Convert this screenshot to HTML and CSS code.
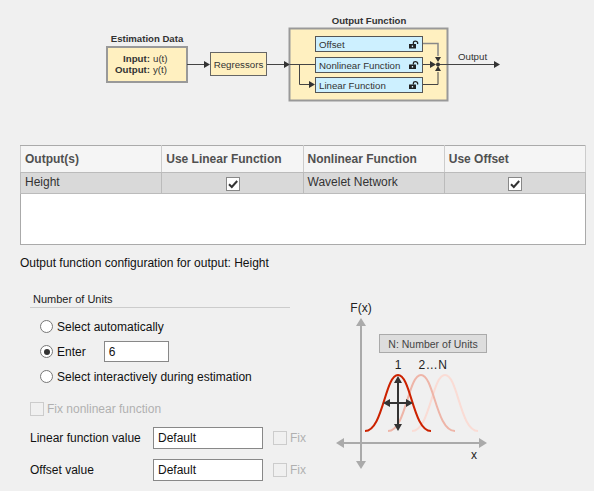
FILE: index.html
```html
<!DOCTYPE html>
<html>
<head>
  <meta charset="utf-8">
  <title>Output Function</title>
  <link rel="stylesheet" href="styles.css">
</head>
<body>
  <svg class="block-diagram" width="594" height="145" viewBox="0 0 594 145">
    <defs>
      <g id="lock">
        <rect x="0" y="3.5" width="7" height="4.5" fill="#222"/>
        <path d="M4.4 3.5V2Q4.4 .6 6.3 .6T8.6 2V3.5" fill="none" stroke="#222" stroke-width="1.3"/>
        <rect x="2.8" y="5" width="1.3" height="1.6" fill="#cdf0ff"/>
      </g>
    </defs>

    <!-- estimation data -->
    <text class="dg-title" x="147" y="42" text-anchor="middle">Estimation Data</text>
    <rect class="dg-yellow" x="107" y="47" width="80" height="35"/>
    <text class="dg-text" x="150" y="62" text-anchor="end"><tspan class="dg-bold">Input:</tspan></text>
    <text class="dg-text" x="153" y="62">u(t)</text>
    <text class="dg-text" x="150" y="73" text-anchor="end"><tspan class="dg-bold">Output:</tspan></text>
    <text class="dg-text" x="153" y="73">y(t)</text>

    <!-- regressors -->
    <rect class="dg-yellow thin" x="210.5" y="52.5" width="56" height="23"/>
    <text class="dg-text" x="238.5" y="68" text-anchor="middle">Regressors</text>

    <!-- output function -->
    <text class="dg-title" x="369" y="24" text-anchor="middle">Output Function</text>
    <rect class="dg-yellow" x="289.5" y="28.5" width="158" height="72"/>
    <rect class="dg-blue" x="315.5" y="36.5" width="107" height="15"/>
    <rect class="dg-blue" x="315.5" y="57.5" width="107" height="15"/>
    <rect class="dg-blue" x="315.5" y="77.5" width="107" height="15"/>
    <text class="dg-text" x="319" y="48">Offset</text>
    <text class="dg-text" x="319" y="69">Nonlinear Function</text>
    <text class="dg-text" x="319" y="89">Linear Function</text>
    <use href="#lock" x="409" y="40.5"/>
    <use href="#lock" x="409" y="61"/>
    <use href="#lock" x="409" y="81"/>

    <!-- wires -->
    <path class="wire" d="M187 64.5H205M267 64.5H284M290 64.5H315M299.5 64.5V84.5H310M423 64.5H431M438 64.5H497"/>
    <path class="wire gray" d="M423 43.5H438V56"/>
    <path class="wire" d="M423 84.5H438V72"/>
    <path class="arrow" d="M204 61L210 64.5L204 68ZM284 61L290 64.5L284 68ZM309 81L315 84.5L309 88ZM430 61L436 64.5L430 68ZM435 57H441L438 62ZM435 71H441L438 66ZM494 61L500 64.5L494 68Z"/>
    <circle class="arrow" cx="438" cy="64.5" r="2"/>
    <text class="dg-text" x="458" y="60">Output</text>
  </svg>

  <table class="outputs-table">
    <thead>
      <tr>
        <th>Output(s)</th>
        <th>Use Linear Function</th>
        <th>Nonlinear Function</th>
        <th>Use Offset</th>
      </tr>
    </thead>
    <tbody>
      <tr class="selected">
        <td>Height</td>
        <td class="center"><span class="check"><svg width="12" height="12" viewBox="0 0 12 12"><path d="M2 6.2L4.8 9L10.2 3" fill="none" stroke="#333" stroke-width="2"/></svg></span></td>
        <td>Wavelet Network</td>
        <td class="center"><span class="check"><svg width="12" height="12" viewBox="0 0 12 12"><path d="M2 6.2L4.8 9L10.2 3" fill="none" stroke="#333" stroke-width="2"/></svg></span></td>
      </tr>
      <tr class="filler"><td colspan="4"></td></tr>
    </tbody>
  </table>

  <p class="config-label">Output function configuration for output: Height</p>

  <div class="config">
    <div class="config-left">
      <div class="group-title">Number of Units</div>

      <div class="radio-row"><span class="radio"></span>Select automatically</div>
      <div class="radio-row">
        <span class="radio on"></span>Enter
        <span class="field field-units">6</span>
      </div>
      <div class="radio-row"><span class="radio"></span>Select interactively during estimation</div>

      <div class="fix-row disabled"><span class="check off"></span>Fix nonlinear function</div>

      <div class="value-row">
        <span class="value-label">Linear function value</span>
        <span class="field field-value">Default</span>
        <span class="fix disabled"><span class="check off"></span>Fix</span>
      </div>
      <div class="value-row">
        <span class="value-label">Offset value</span>
        <span class="field field-value">Default</span>
        <span class="fix disabled"><span class="check off"></span>Fix</span>
      </div>
    </div>

    <svg class="units-plot" width="170" height="180" viewBox="330 295 170 180">
      <path class="curve c3" d="M412 431C430 431 432 375 445 375S460 431 478 431"/>
      <path class="curve c2" d="M388 431C406 431 408 375 421 375S436 431 455 431"/>
      <path class="curve c1" d="M365 431C383 431 385 375 398 375S413 431 431 431"/>

      <path class="axis" d="M361 325V462M342 443H481"/>
      <path class="axis-head" d="M361 318L366 326H356ZM361 469L366 461H356ZM336 443L344 438V448ZM487 443L479 438V448Z"/>

      <path class="move" d="M398 381V427M387 403H409"/>
      <path class="move-head" d="M398 376L402 383H394ZM398 431L402 424H394ZM383 403L390 399V407ZM413 403L406 399V407Z"/>

      <rect class="legend" x="379.5" y="334.5" width="107" height="18"/>
      <text class="legend-text" x="433" y="348" text-anchor="middle">N: Number of Units</text>
      <text class="plot-text" x="361" y="312" text-anchor="middle">F(x)</text>
      <text class="plot-text" x="398" y="369" text-anchor="middle">1</text>
      <text class="plot-text spaced" x="433" y="369" text-anchor="middle">2…N</text>
      <text class="plot-text" x="474" y="459" text-anchor="middle">x</text>
    </svg>
  </div>
</body>
</html>
```

FILE: styles.css
```css
* {
  box-sizing: border-box;
}

body {
  margin: 0;
  width: 594px;
  height: 491px;
  overflow: hidden;
  background: #f0f0f0;
  color: #111;
  font-family: "Liberation Sans", Arial, sans-serif;
  font-size: 12px;
}

.block-diagram {
  display: block;
}

.dg-title {
  font-size: 9.6px;
  font-weight: bold;
  fill: #333;
}

.dg-text {
  font-size: 9.7px;
  fill: #333;
}

.dg-bold {
  font-weight: bold;
}

.dg-yellow {
  fill: #fff0c0;
  stroke: #999;
  stroke-width: 2;
}

.dg-yellow.thin {
  stroke: #666;
  stroke-width: 1;
}

.dg-blue {
  fill: #cdf0ff;
  stroke: #555;
  stroke-width: 1;
}

.wire {
  fill: none;
  stroke: #444;
  stroke-width: 1;
}

.wire.gray {
  stroke: #888;
  stroke-width: 1.5;
}

.arrow {
  fill: #333;
}

.outputs-table {
  width: 566px;
  margin: 0 0 0 20px;
  border-collapse: collapse;
  table-layout: fixed;
  background: #fff;
  border: 1px solid #aaa;
}

.outputs-table th {
  height: 27px;
  padding: 0 4px;
  background: #f5f5f5;
  border: 1px solid #bbb;
  border-color: #aaa #ccc #bbb;
  color: #505050;
  font-weight: bold;
  font-size: 12px;
  text-align: left;
}

.outputs-table td {
  padding: 0 4px 3px;
}

.selected td {
  height: 21px;
  background: #d9d9d9;
  border: 1px solid #bbb;
  border-width: 0 1px 1px;
  color: #333;
}

.filler td {
  height: 51px;
}

.outputs-table td.center {
  padding: 1px 0 0 1px;
  text-align: center;
  vertical-align: middle;
}

.check {
  display: inline-block;
  width: 14px;
  height: 14px;
  border: 1px solid #888;
  background: #fff;
  vertical-align: middle;
}

.check svg {
  display: block;
  margin: 0 auto;
}

.check.off {
  border-color: #ccc;
  background: #f0f0f0;
}

.config-label {
  margin: 11px 0 0 20px;
  line-height: 14px;
}

.config {
  display: flex;
  margin-top: 22px;
}

.config-left {
  width: 310px;
  padding-left: 30px;
}

.group-title {
  width: 260px;
  height: 16px;
  margin-bottom: 6px;
  padding-left: 3px;
  border-bottom: 1px solid #ccc;
  font-size: 11px;
  line-height: 14px;
  color: #222;
}

.radio-row {
  display: flex;
  align-items: center;
  height: 25px;
  padding-left: 10px;
}

.radio {
  position: relative;
  width: 13px;
  height: 13px;
  margin-right: 4px;
  border: 1px solid #777;
  border-radius: 50%;
  background: #fff;
}

.radio.on::after {
  content: "";
  position: absolute;
  left: 2.5px;
  top: 2.5px;
  width: 6px;
  height: 6px;
  border-radius: 50%;
  background: #333;
}

.field {
  display: flex;
  align-items: center;
  border: 1px solid #888;
  background: #fff;
  padding-left: 4px;
}

.field-units {
  width: 65px;
  height: 21px;
  margin-left: 18px;
}

.field-value {
  width: 110px;
  height: 22px;
}

.disabled {
  color: #b0b0b0;
}

.fix-row {
  display: flex;
  align-items: center;
  gap: 3px;
  height: 14px;
  margin-top: 13px;
}

.value-row {
  display: flex;
  align-items: center;
  height: 22px;
  margin-bottom: 10px;
}

.fix-row + .value-row {
  margin-top: 11px;
}

.value-label {
  width: 123px;
}

.fix {
  display: flex;
  align-items: center;
  gap: 3px;
  margin-left: 10px;
}

.units-plot {
  display: block;
  margin-top: 3px;
  margin-left: 20px;
}

.curve {
  fill: none;
  stroke-width: 2;
}

.c1 {
  stroke: #cc2200;
}

.c2 {
  stroke: #eeb5a8;
}

.c3 {
  stroke: #fadcd5;
}

.axis {
  fill: none;
  stroke: #aaa;
  stroke-width: 2;
}

.axis-head {
  fill: #aaa;
}

.move {
  fill: none;
  stroke: #333;
  stroke-width: 2;
}

.move-head {
  fill: #333;
}

.legend {
  fill: #ddd;
  stroke: #aaa;
}

.legend-text {
  font-size: 10.5px;
  fill: #444;
}

.plot-text {
  font-size: 12px;
  fill: #222;
}

.plot-text.spaced {
  letter-spacing: 0.6px;
}
```
